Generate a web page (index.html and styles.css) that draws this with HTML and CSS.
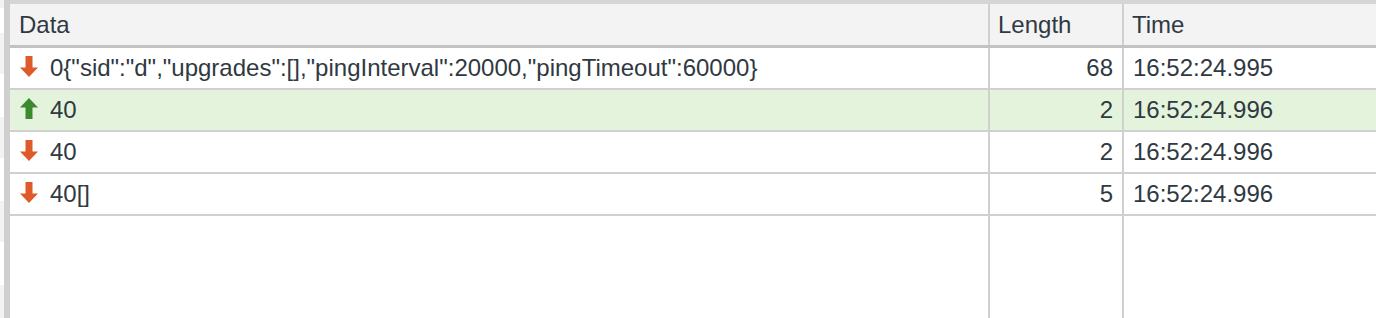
FILE: index.html
```html
<!DOCTYPE html>
<html>
<head>
<meta charset="utf-8">
<link rel="stylesheet" href="styles.css">
</head>
<body>
<div class="edge"></div>
<div class="divider"></div>
<div class="grid">
  <div class="row head">
    <div class="cell c-data">Data</div>
    <div class="cell c-len">Length</div>
    <div class="cell c-time">Time</div>
  </div>
  <div class="row">
    <div class="cell c-data"><svg class="arrow down" viewBox="0 0 18 21" width="18" height="21"><path d="M5.5 0h7v11.5H18L9 21 0 11.5h5.5z"/></svg><span>0{"sid":"d","upgrades":[],"pingInterval":20000,"pingTimeout":60000}</span></div>
    <div class="cell c-len num">68</div>
    <div class="cell c-time">16:52:24.995</div>
  </div>
  <div class="row sent">
    <div class="cell c-data"><svg class="arrow up" viewBox="0 0 18 21" width="18" height="21"><path d="M5.5 21h7V9.5H18L9 0 0 9.5h5.5z"/></svg><span>40</span></div>
    <div class="cell c-len num">2</div>
    <div class="cell c-time">16:52:24.996</div>
  </div>
  <div class="row">
    <div class="cell c-data"><svg class="arrow down" viewBox="0 0 18 21" width="18" height="21"><path d="M5.5 0h7v11.5H18L9 21 0 11.5h5.5z"/></svg><span>40</span></div>
    <div class="cell c-len num">2</div>
    <div class="cell c-time">16:52:24.996</div>
  </div>
  <div class="row">
    <div class="cell c-data"><svg class="arrow down" viewBox="0 0 18 21" width="18" height="21"><path d="M5.5 0h7v11.5H18L9 21 0 11.5h5.5z"/></svg><span>40[]</span></div>
    <div class="cell c-len num">5</div>
    <div class="cell c-time">16:52:24.996</div>
  </div>
  <div class="row filler">
    <div class="cell c-data"></div>
    <div class="cell c-len"></div>
    <div class="cell c-time"></div>
  </div>
</div>
</body>
</html>
```

FILE: styles.css
```css
html, body {
  margin: 0;
  padding: 0;
}
body {
  width: 1376px;
  height: 318px;
  overflow: hidden;
  display: flex;
  background: #ffffff;
  font-family: "Liberation Sans", Arial, Helvetica, sans-serif;
  font-size: 24px;
  color: #303942;
}
.edge {
  width: 4px;
  flex: none;
  background: repeating-linear-gradient(to bottom, #f3f3f3 0, #f3f3f3 41px, #ffffff 41px, #ffffff 84px);
  background-position: 0 33px;
}
.divider {
  width: 6px;
  flex: none;
  background: #cfcfcf;
}
.grid {
  flex: 1;
  display: flex;
  flex-direction: column;
  border-top: 4px solid #d5d5d5;
}
.row {
  display: grid;
  grid-template-columns: 980px 134px 1fr;
  height: 42px;
  box-sizing: border-box;
  border-bottom: 2px solid #d0d0d0;
  flex: none;
}
.row.head {
  height: 44px;
  background: #f3f3f3;
  border-bottom: 3px solid #c2c2c2;
}
.row.sent {
  background: #e4f4dc;
}
.row.filler {
  flex: 1;
  border-bottom: none;
}
.cell {
  display: flex;
  align-items: center;
  box-sizing: border-box;
  padding: 0 9px;
  white-space: nowrap;
  overflow: hidden;
}
.c-data, .c-len {
  border-right: 2px solid #d0d0d0;
}
.row .c-data {
  padding-left: 10px;
}
.num {
  justify-content: flex-end;
}
.arrow {
  flex: none;
  margin-right: 12px;
  margin-top: -3px;
}
.arrow.down { fill: #df5a2b; }
.arrow.up { fill: #3b8a2b; }
.head .c-data { padding-left: 9px; }
.head .c-len { padding-left: 8px; }
.head .c-time { padding-left: 8px; }
```
